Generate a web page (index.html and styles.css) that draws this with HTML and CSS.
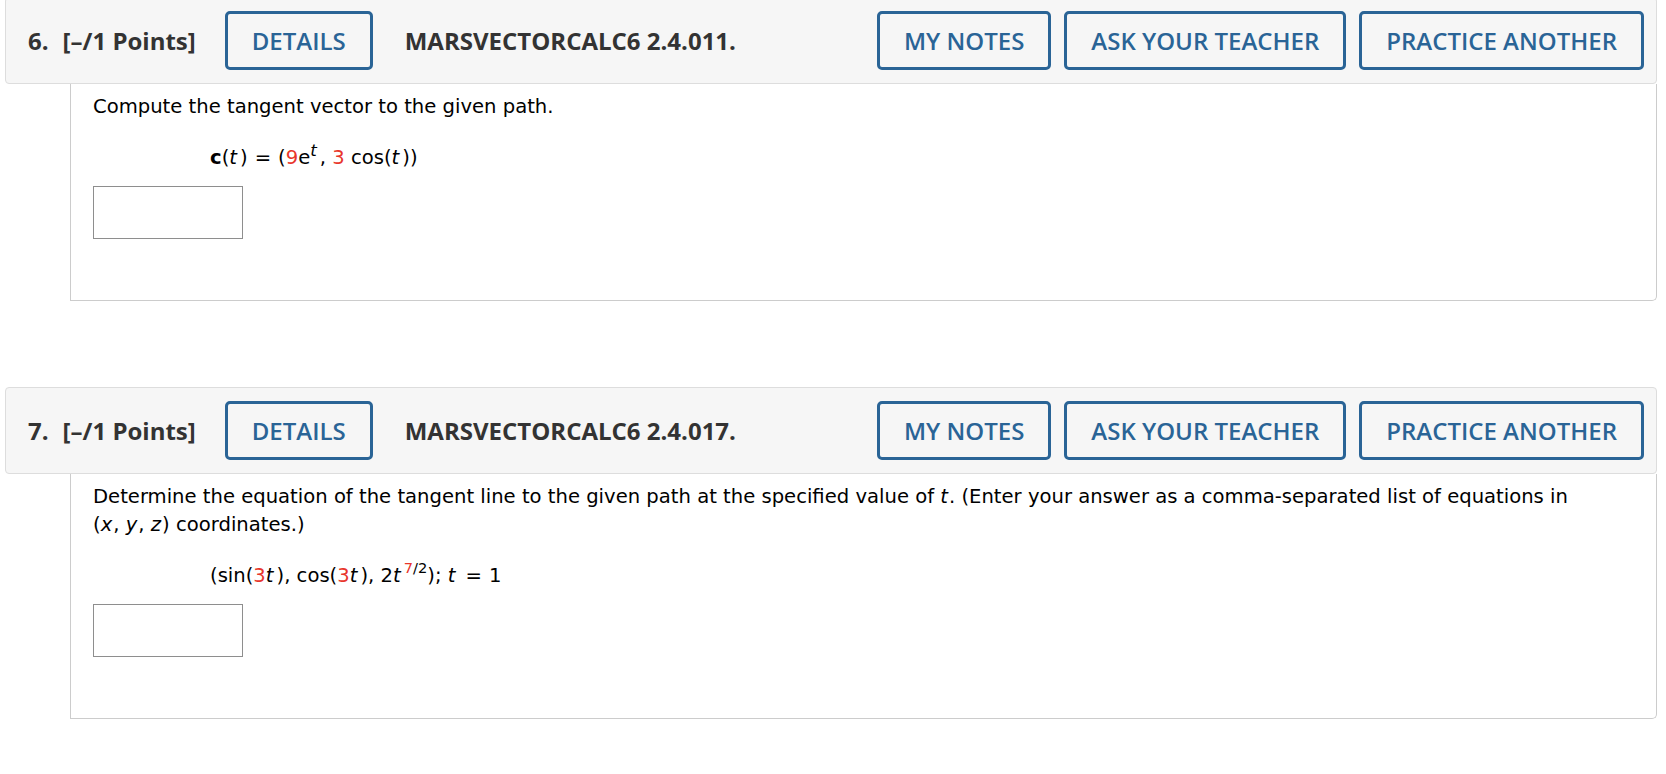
FILE: index.html
```html
<!DOCTYPE html>
<html lang="en">
<head>
<meta charset="utf-8">
<title>Questions</title>
<link rel="stylesheet" href="styles.css">
</head>
<body>
<div class="page">
  <section class="question">
    <div class="q-head">
      <span class="q-num">6.</span>
      <span class="q-points">[–/1 Points]</span>
      <button class="btn btn-details" type="button">DETAILS</button>
      <span class="q-title">MARSVECTORCALC6 2.4.011.</span>
      <div class="q-actions">
        <button class="btn" type="button">MY NOTES</button>
        <button class="btn" type="button">ASK YOUR TEACHER</button>
        <button class="btn" type="button">PRACTICE ANOTHER</button>
      </div>
    </div>
    <div class="q-body">
      <p class="q-text">Compute the tangent vector to the given path.</p>
      <div class="formula"><b>c</b>(<i>t</i>)<span class="eq">=</span>(<span class="red">9</span>e<sup class="sup-t"><i>t</i></sup>, <span class="red">3</span> cos(<i>t</i>))</div>
      <input class="answer" type="text" aria-label="answer">
    </div>
  </section>

  <section class="question">
    <div class="q-head">
      <span class="q-num">7.</span>
      <span class="q-points">[–/1 Points]</span>
      <button class="btn btn-details" type="button">DETAILS</button>
      <span class="q-title">MARSVECTORCALC6 2.4.017.</span>
      <div class="q-actions">
        <button class="btn" type="button">MY NOTES</button>
        <button class="btn" type="button">ASK YOUR TEACHER</button>
        <button class="btn" type="button">PRACTICE ANOTHER</button>
      </div>
    </div>
    <div class="q-body">
      <p class="q-text">Determine the equation of the tangent line to the given path at the specified value of <i>t</i>. (Enter your answer as a comma-separated list of equations in (<i>x</i>, <i>y</i>, <i>z</i>) coordinates.)</p>
      <div class="formula">(sin(<span class="red">3</span><i>t</i>), cos(<span class="red">3</span><i>t</i>), 2<i>t</i><sup class="sup-frac"><span class="red">7</span>/2</sup>); <i>t</i><span class="eq">=</span>1</div>
      <input class="answer" type="text" aria-label="answer">
    </div>
  </section>
</div>
</body>
</html>
```

FILE: styles.css
```css
html, body {
  margin: 0;
  padding: 0;
  background: #ffffff;
}

.page {
  margin: -3px 9px 0 5px;
}

.question + .question {
  margin-top: 86px;
}

.q-head {
  display: flex;
  align-items: center;
  background: #f6f6f6;
  border: 1px solid #dddddd;
  border-radius: 4px;
  padding: 13px 12px 13px 22px;
  font-family: "Open Sans", "Liberation Sans", sans-serif;
  font-size: 24px;
  color: #333333;
}

.q-num {
  font-weight: 700;
  margin-right: 14px;
}

.q-points {
  font-weight: 700;
}

.q-title {
  font-weight: 700;
  margin-left: 32px;
}

.btn {
  box-sizing: border-box;
  height: 59px;
  padding: 0 24px;
  border: 3px solid #2a6496;
  border-radius: 5px;
  background: transparent;
  color: #2a6496;
  font-family: "Open Sans", "Liberation Sans", sans-serif;
  font-size: 24px;
  font-weight: 600;
  line-height: 1;
  cursor: pointer;
}

.btn-details {
  margin-left: 29px;
}

.q-actions {
  margin-left: auto;
  display: flex;
  gap: 13px;
}

.q-body {
  margin-left: 65px;
  border: 1px solid #cccccc;
  border-top: 0;
  border-radius: 0 0 5px 0;
  padding: 9px 23px 61px 22px;
  font-family: "DejaVu Sans", Verdana, sans-serif;
  font-size: 19.6px;
  line-height: 28px;
  color: #000000;
}

.q-text {
  margin: 0;
  max-width: 1480px;
}

.q-text i {
  padding-right: 1px;
}

.formula {
  margin: 23px 0 0 117px;
}

.formula i {
  padding-right: 3px;
}

.eq {
  margin: 0 7px;
}

.red {
  color: #e8362b;
}

sup {
  line-height: 0;
}

.sup-t {
  font-size: 0.85em;
  vertical-align: 0.5em;
}

.sup-frac {
  font-size: 0.75em;
  vertical-align: 0.6em;
}

.answer {
  display: block;
  box-sizing: border-box;
  margin: 14px 0 0 0;
  width: 150px;
  height: 53px;
  padding: 0;
  border: 1px solid #8e8e8e;
  border-radius: 0;
  background: #ffffff;
}
```
